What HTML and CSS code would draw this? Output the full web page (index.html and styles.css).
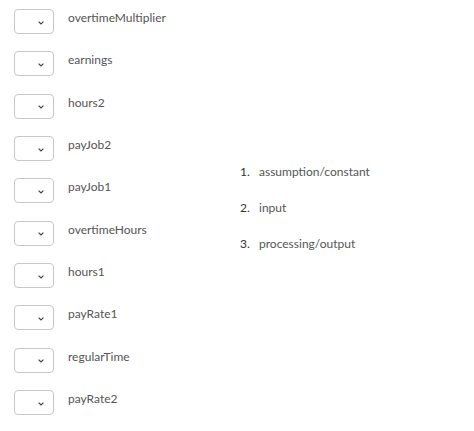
FILE: index.html
```html
<!DOCTYPE html>
<html>
<head>
<meta charset="utf-8">
<link rel="stylesheet" href="styles.css">
</head>
<body>
<div class="page">
  <div class="matches">
    <div class="row"><div class="select"><svg class="chev" width="6" height="4" viewBox="0 0 6 4"><path d="M0.6 0.6 L3 3 L5.4 0.6" fill="none" stroke="#444" stroke-width="1.2"/></svg></div><span class="label">overtimeMultiplier</span></div>
    <div class="row"><div class="select"><svg class="chev" width="6" height="4" viewBox="0 0 6 4"><path d="M0.6 0.6 L3 3 L5.4 0.6" fill="none" stroke="#444" stroke-width="1.2"/></svg></div><span class="label">earnings</span></div>
    <div class="row"><div class="select"><svg class="chev" width="6" height="4" viewBox="0 0 6 4"><path d="M0.6 0.6 L3 3 L5.4 0.6" fill="none" stroke="#444" stroke-width="1.2"/></svg></div><span class="label">hours2</span></div>
    <div class="row"><div class="select"><svg class="chev" width="6" height="4" viewBox="0 0 6 4"><path d="M0.6 0.6 L3 3 L5.4 0.6" fill="none" stroke="#444" stroke-width="1.2"/></svg></div><span class="label">payJob2</span></div>
    <div class="row"><div class="select"><svg class="chev" width="6" height="4" viewBox="0 0 6 4"><path d="M0.6 0.6 L3 3 L5.4 0.6" fill="none" stroke="#444" stroke-width="1.2"/></svg></div><span class="label">payJob1</span></div>
    <div class="row"><div class="select"><svg class="chev" width="6" height="4" viewBox="0 0 6 4"><path d="M0.6 0.6 L3 3 L5.4 0.6" fill="none" stroke="#444" stroke-width="1.2"/></svg></div><span class="label">overtimeHours</span></div>
    <div class="row"><div class="select"><svg class="chev" width="6" height="4" viewBox="0 0 6 4"><path d="M0.6 0.6 L3 3 L5.4 0.6" fill="none" stroke="#444" stroke-width="1.2"/></svg></div><span class="label">hours1</span></div>
    <div class="row"><div class="select"><svg class="chev" width="6" height="4" viewBox="0 0 6 4"><path d="M0.6 0.6 L3 3 L5.4 0.6" fill="none" stroke="#444" stroke-width="1.2"/></svg></div><span class="label">payRate1</span></div>
    <div class="row"><div class="select"><svg class="chev" width="6" height="4" viewBox="0 0 6 4"><path d="M0.6 0.6 L3 3 L5.4 0.6" fill="none" stroke="#444" stroke-width="1.2"/></svg></div><span class="label">regularTime</span></div>
    <div class="row"><div class="select"><svg class="chev" width="6" height="4" viewBox="0 0 6 4"><path d="M0.6 0.6 L3 3 L5.4 0.6" fill="none" stroke="#444" stroke-width="1.2"/></svg></div><span class="label">payRate2</span></div>
  </div>
  <ol class="choices">
    <li><span class="num">1.</span><span class="txt">assumption/constant</span></li>
    <li><span class="num">2.</span><span class="txt">input</span></li>
    <li><span class="num">3.</span><span class="txt">processing/output</span></li>
  </ol>
</div>
</body>
</html>
```

FILE: styles.css
```css
html, body {
  margin: 0;
  padding: 0;
  background: #fff;
}
body {
  font-family: Lato, "Open Sans", sans-serif;
  font-size: 12px;
  color: #555;
}
.page {
  display: flex;
  align-items: flex-start;
}
.matches {
  display: grid;
  grid-auto-rows: 42.35px;
  padding: 9px 0 0 14px;
  width: 226px;
}
.row {
  display: flex;
  align-items: flex-start;
}
.select {
  box-sizing: border-box;
  width: 40px;
  height: 25px;
  border: 1px solid #c8c8c8;
  border-radius: 4px;
  display: flex;
  align-items: center;
  justify-content: center;
  padding-left: 13px;
  padding-top: 2px;
}
.chev {
  display: block;
}
.label {
  margin-left: 14px;
  line-height: 18px;
}
.choices {
  list-style: none;
  margin: 163px 0 0 0;
  padding: 0;
  display: grid;
  grid-auto-rows: 36px;
}
.choices li {
  display: flex;
  line-height: 18px;
}
.num {
  width: 19px;
  color: #333;
}
```
